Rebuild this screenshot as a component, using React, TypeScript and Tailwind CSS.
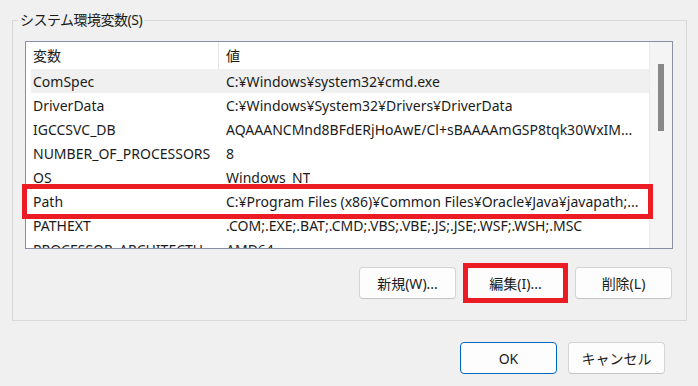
const rows: [string, string][] = [
  ['ComSpec', 'C:¥Windows¥system32¥cmd.exe'],
  ['DriverData', 'C:¥Windows¥System32¥Drivers¥DriverData'],
  ['IGCCSVC_DB', 'AQAAANCMnd8BFdERjHoAwE/Cl+sBAAAAmGSP8tqk30WxIM...'],
  ['NUMBER_OF_PROCESSORS', '8'],
  ['OS', 'Windows_NT'],
  ['Path', 'C:¥Program Files (x86)¥Common Files¥Oracle¥Java¥javapath;...'],
  ['PATHEXT', '.COM;.EXE;.BAT;.CMD;.VBS;.VBE;.JS;.JSE;.WSF;.WSH;.MSC'],
  ['PROCESSOR_ARCHITECTU...', 'AMD64'],
]

function Btn({ label, primary }: { label: string; primary?: boolean }) {
  return (
    <button
      className={
        primary
          ? 'w-[97px] h-[32px] rounded-[4px] border border-[#0067c0] bg-[#fdfdfd] text-[14px] text-[#1b1b1b]'
          : 'w-[97px] h-[32px] rounded-[4px] border border-[#d4d4d4] border-b-[#c4c4c4] bg-[#fdfdfd] text-[14px] text-[#1b1b1b]'
      }
    >
      {label}
    </button>
  )
}

export default function App() {
  return (
    <div className="w-[698px] h-[386px] overflow-hidden bg-[#f0f0f0] pt-[20px] pl-[12px] font-['Noto_Sans','Noto_Sans_CJK_JP',sans-serif] text-[#1b1b1b]">
      <div className="relative w-[675px] h-[301px] border border-[#d9d9d9] pt-[20px] pl-[12px] flex flex-col">
        <span className="absolute left-[5px] -top-[11px] px-[2px] bg-[#f0f0f0] text-[14px] leading-[20px] tracking-[-0.5px]">
          システム環境変数(S)
        </span>

        <div className="w-[648px] h-[208px] border border-[#8a90a0] bg-white flex overflow-hidden">
          <div className="flex-1 flex flex-col text-[14px]">
            <div className="h-[27px] flex items-center shrink-0 pl-[5px]">
              <div className="w-[188px] h-full pl-[2px] flex items-center border-r border-[#e5e5e5]">変数</div>
              <div className="pl-[7px]">値</div>
            </div>
            {rows.map(([name, value], i) => (
              <div
                key={name}
                className={
                  'h-[24px] shrink-0 ml-[5px] flex items-center whitespace-nowrap ' +
                  (i === 0 ? 'bg-[#f0f0f0]' : '')
                }
              >
                <div className="w-[193px] pl-[2px] overflow-hidden">{name}</div>
                <div className="pl-[2px] overflow-hidden">{value}</div>
              </div>
            ))}
          </div>
          <div className="w-[23px] shrink-0 bg-[#f4f4f4] border-l border-[#ececec] pt-[22px] pl-[8px]">
            <div className="w-[6px] h-[67px] bg-[#878787]" />
          </div>
        </div>

        <div className="w-[648px] mt-[18px] flex justify-end gap-[11px] pr-[1px]">
          <Btn label="新規(W)..." />
          <span className="relative flex">
            <Btn label="編集(I)..." />
            <span className="absolute -inset-[4px] border-[5px] border-[#ec1c24]" />
          </span>
          <Btn label="削除(L)" />
        </div>

        <span className="absolute left-[9px] top-[163px] w-[631px] h-[35px] border-[5px] border-[#ec1c24]" />
      </div>

      <div className="w-[653px] mt-[21px] flex justify-end gap-[11px]">
        <Btn label="OK" primary />
        <Btn label="キャンセル" />
      </div>
    </div>
  )
}
